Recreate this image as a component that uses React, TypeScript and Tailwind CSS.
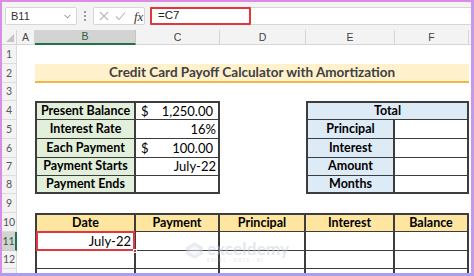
import type { ReactNode } from 'react';
import { ChevronDown } from 'lucide-react';

const COLS = 'grid grid-rows-1 grid-cols-[15px_18px_101px_84px_86px_89px_74px_1fr]';

const label = 'flex items-center justify-center leading-none font-bold text-[12.5px] text-black border-[#3d3d3d] ';
const value = 'flex items-center leading-none text-[13px] text-black bg-white border-[#3d3d3d] ';

function Row({ n, h, sel, children }: { n?: number; h: string; sel?: boolean; children: ReactNode }) {
  return (
    <div className={`${COLS} ${h} shrink-0`}>
      <div
        className={
          sel
            ? 'flex items-center justify-center leading-none bg-[#d3d3d3] border-r-2 border-r-[#217346] border-b-[1px] border-b-[#c8c8c8] text-[10.5px] text-[#1e5c3a]'
            : 'flex items-center justify-center leading-none bg-[#f3f3f3] border-r-[1px] border-b-[1px] border-[#dcdcdc] text-[10.5px] text-[#555]'
        }
      >
        {n}
      </div>
      {children}
    </div>
  );
}

const Blank = () => <div />;

function FormulaBar() {
  return (
    <div className="h-[28px] flex items-center bg-[#f3f3f3] pl-[3px] shrink-0 font-['Liberation_Sans',sans-serif]">
      <div className="w-[72px] h-[18px] bg-white border border-[#d6d6d6] rounded-[2px] flex items-center justify-between pl-[5px] pr-[3px] text-[11px] text-[#333]">
        <span>B11</span>
        <ChevronDown size={11} strokeWidth={1.6} className="text-[#555]" />
      </div>
      <div className="w-[16px] flex flex-col items-center gap-[2px]">
        <span className="w-[2px] h-[2px] bg-[#9a9a9a]" />
        <span className="w-[2px] h-[2px] bg-[#9a9a9a]" />
        <span className="w-[2px] h-[2px] bg-[#9a9a9a]" />
      </div>
      <div className="w-[52px] h-[18px] bg-white border border-[#d6d6d6] rounded-[2px] flex items-center pl-[5px] gap-[6px]">
        <svg width="10" height="10" viewBox="0 0 10 10">
          <path d="M1 1L9 9M9 1L1 9" stroke="#b8b8b8" strokeWidth="1.1" />
        </svg>
        <svg width="11" height="10" viewBox="0 0 11 10">
          <path d="M1 5.5L4 8.5L10 1.5" stroke="#b8b8b8" strokeWidth="1.1" fill="none" />
        </svg>
        <span className="font-['Liberation_Serif',serif] italic text-[13px] text-[#333] leading-none ml-[2px]">fx</span>
      </div>
      <div className="relative flex-1 ml-[5px] h-[18px] bg-white border-y border-[#d6d6d6] flex items-center pl-[8px] text-[11.5px] text-[#222]">
        <div className="absolute left-0 top-[-1px] w-[101px] h-[18px] border-2 border-[#e0383e] rounded-[1px]" />
        =C7
      </div>
    </div>
  );
}

function ColumnHeaders() {
  const hd = 'flex items-center justify-center leading-none bg-[#f3f3f3] border-r-[1px] border-b-[1px] border-[#d6d6d6] text-[10.5px] text-[#444]';
  return (
    <div className={`${COLS} h-[15px] shrink-0 font-['Liberation_Sans',sans-serif]`}>
      <div className="relative bg-[#f3f3f3] border-r-[1px] border-b-[1px] border-[#d6d6d6]">
        <div className="absolute right-[2px] bottom-[2px] w-0 h-0 border-l-[8px] border-l-transparent border-b-[8px] border-b-[#c4c4c4]" />
      </div>
      <div className={hd}>A</div>
      <div className="flex items-center justify-center leading-none bg-[#d3d3d3] border-r-[1px] border-r-[#c6c6c6] border-b-2 border-b-[#217346] text-[10.5px] text-[#2c5e3f]">B</div>
      <div className={hd}>C</div>
      <div className={hd}>D</div>
      <div className={hd}>E</div>
      <div className={hd}>F</div>
      <div className="bg-[#f3f3f3] border-b-[1px] border-[#d6d6d6]" />
    </div>
  );
}

function Watermark() {
  return (
    <div className="absolute left-[183px] top-[195px] flex items-start gap-[3px] opacity-50 pointer-events-none">
      <svg width="19" height="17" viewBox="0 0 19 17" className="mt-[2px]">
        <path d="M9.5 0.5L18 5V12L9.5 16.5L1 12V5Z" fill="#d3d9e3" />
        <path d="M9.5 4L14.5 6.8V11L9.5 13.5L4.5 11V6.8Z" fill="#eef1f6" />
      </svg>
      <div className="flex flex-col leading-none">
        <span className="font-['Lato',sans-serif] font-bold text-[17px] text-[#c9d1de] tracking-[0.2px]">exceldemy</span>
        <span className="font-['Lato',sans-serif] text-[5px] text-[#c9d1de] tracking-[1px] mt-[1px]">EXCEL · DATA · BI</span>
      </div>
    </div>
  );
}

export default function App() {
  return (
    <div className="w-[474px] h-[276px] overflow-hidden bg-white flex flex-col border-t-2 border-t-[#dc8de3] border-l-2 border-l-[#d98ee6] border-r-[3px] border-r-[#c597ee] border-b-[3px] border-b-[#a99ef3] font-['Lato',sans-serif]">
      <FormulaBar />
      <ColumnHeaders />
      <div className="relative flex-1 min-h-0 flex flex-col overflow-hidden">
        <Row n={1} h="h-[19px]">
          <Blank /><Blank /><Blank /><Blank /><Blank /><Blank /><Blank />
        </Row>
        <Row n={2} h="h-[19px]">
          <Blank />
          <div className="col-span-5 flex items-center justify-center leading-none bg-[#fef1cc] border-b-2 border-[#f1b548] font-bold text-[13.5px] text-[#404040]">
            Credit Card Payoff Calculator with Amortization
          </div>
          <Blank />
        </Row>
        <Row n={3} h="h-[18px]">
          <Blank /><Blank /><Blank /><Blank /><Blank /><Blank /><Blank />
        </Row>
        <Row n={4} h="h-[19px]">
          <Blank />
          <div className={label + 'bg-[#e2efda] border-l-2 border-t-2 border-r-2 border-b-[1px]'}>Present Balance</div>
          <div className={value + 'border-t-2 border-r-2 border-b-[1px] justify-between pl-[5px] pr-[5px]'}>
            <span>$</span><span>1,250.00</span>
          </div>
          <Blank />
          <div className={label + 'col-span-2 bg-[#ddebf7] border-l-2 border-t-2 border-r-2 border-b-[1px]'}>Total</div>
          <Blank />
        </Row>
        <Row n={5} h="h-[19px]">
          <Blank />
          <div className={label + 'bg-[#e2efda] border-l-2 border-r-2 border-b-[1px]'}>Interest Rate</div>
          <div className={value + 'border-r-2 border-b-[1px] justify-end pr-[2px]'}>16%</div>
          <Blank />
          <div className={label + 'bg-[#ddebf7] border-l-2 border-r-2 border-b-[1px]'}>Principal</div>
          <div className={value + 'border-r-2 border-b-[1px]'} />
          <Blank />
        </Row>
        <Row n={6} h="h-[19px]">
          <Blank />
          <div className={label + 'bg-[#e2efda] border-l-2 border-r-2 border-b-[1px]'}>Each Payment</div>
          <div className={value + 'border-r-2 border-b-[1px] justify-between pl-[5px] pr-[5px]'}>
            <span>$</span><span>100.00</span>
          </div>
          <Blank />
          <div className={label + 'bg-[#ddebf7] border-l-2 border-r-2 border-b-[1px]'}>Interest</div>
          <div className={value + 'border-r-2 border-b-[1px]'} />
          <Blank />
        </Row>
        <Row n={7} h="h-[18px]">
          <Blank />
          <div className={label + 'bg-[#e2efda] border-l-2 border-r-2 border-b-[1px]'}>Payment Starts</div>
          <div className={value + 'border-r-2 border-b-[1px] justify-end pr-[2px]'}>July-22</div>
          <Blank />
          <div className={label + 'bg-[#ddebf7] border-l-2 border-r-2 border-b-[1px]'}>Amount</div>
          <div className={value + 'border-r-2 border-b-[1px]'} />
          <Blank />
        </Row>
        <Row n={8} h="h-[18px]">
          <Blank />
          <div className={label + 'bg-[#e2efda] border-l-2 border-r-2 border-b-2'}>Payment Ends</div>
          <div className={value + 'border-r-2 border-b-2'} />
          <Blank />
          <div className={label + 'bg-[#ddebf7] border-l-2 border-r-2 border-b-2'}>Months</div>
          <div className={value + 'border-r-2 border-b-2'} />
          <Blank />
        </Row>
        <Row n={9} h="h-[19px]">
          <Blank /><Blank /><Blank /><Blank /><Blank /><Blank /><Blank />
        </Row>
        <Row n={10} h="h-[19px]">
          <Blank />
          <div className={label + 'bg-[#fee6a0] border-l-2 border-t-2 border-r-2 border-b-[1px]'}>Date</div>
          <div className={label + 'bg-[#fee6a0] border-t-2 border-r-2 border-b-[1px]'}>Payment</div>
          <div className={label + 'bg-[#fee6a0] border-t-2 border-r-2 border-b-[1px]'}>Principal</div>
          <div className={label + 'bg-[#fee6a0] border-t-2 border-r-2 border-b-[1px]'}>Interest</div>
          <div className={label + 'bg-[#fee6a0] border-t-2 border-r-2 border-b-[1px]'}>Balance</div>
          <Blank />
        </Row>
        <Row n={11} h="h-[19px]" sel>
          <Blank />
          <div className={value + 'relative border-l-2 border-r-2 border-b-[1px] justify-end pr-[3px]'}>
            <div className="absolute inset-[-1px] border-2 border-[#e0383e]" />
            <span className="relative">July-22</span>
            <div className="absolute right-[-3px] bottom-[-3px] w-[4px] h-[4px] bg-[#b8423a] border border-white" />
          </div>
          <div className={value + 'border-r-2 border-b-[1px]'} />
          <div className={value + 'border-r-2 border-b-[1px]'} />
          <div className={value + 'border-r-2 border-b-[1px]'} />
          <div className={value + 'border-r-2 border-b-[1px]'} />
          <Blank />
        </Row>
        <Row n={12} h="h-[18px]">
          <Blank />
          <div className={value + 'border-l-2 border-r-2 border-b-[1px]'} />
          <div className={value + 'border-r-2 border-b-[1px]'} />
          <div className={value + 'border-r-2 border-b-[1px]'} />
          <div className={value + 'border-r-2 border-b-[1px]'} />
          <div className={value + 'border-r-2 border-b-[1px]'} />
          <Blank />
        </Row>
        {/* row 13 is cut off by the frame, its number falls below the edge */}
        <Row h="h-[19px]">
          <Blank />
          <div className={value + 'border-l-2 border-r-2 border-b-[1px]'} />
          <div className={value + 'border-r-2 border-b-[1px]'} />
          <div className={value + 'border-r-2 border-b-[1px]'} />
          <div className={value + 'border-r-2 border-b-[1px]'} />
          <div className={value + 'border-r-2 border-b-[1px]'} />
          <Blank />
        </Row>
        <Watermark />
      </div>
    </div>
  );
}
